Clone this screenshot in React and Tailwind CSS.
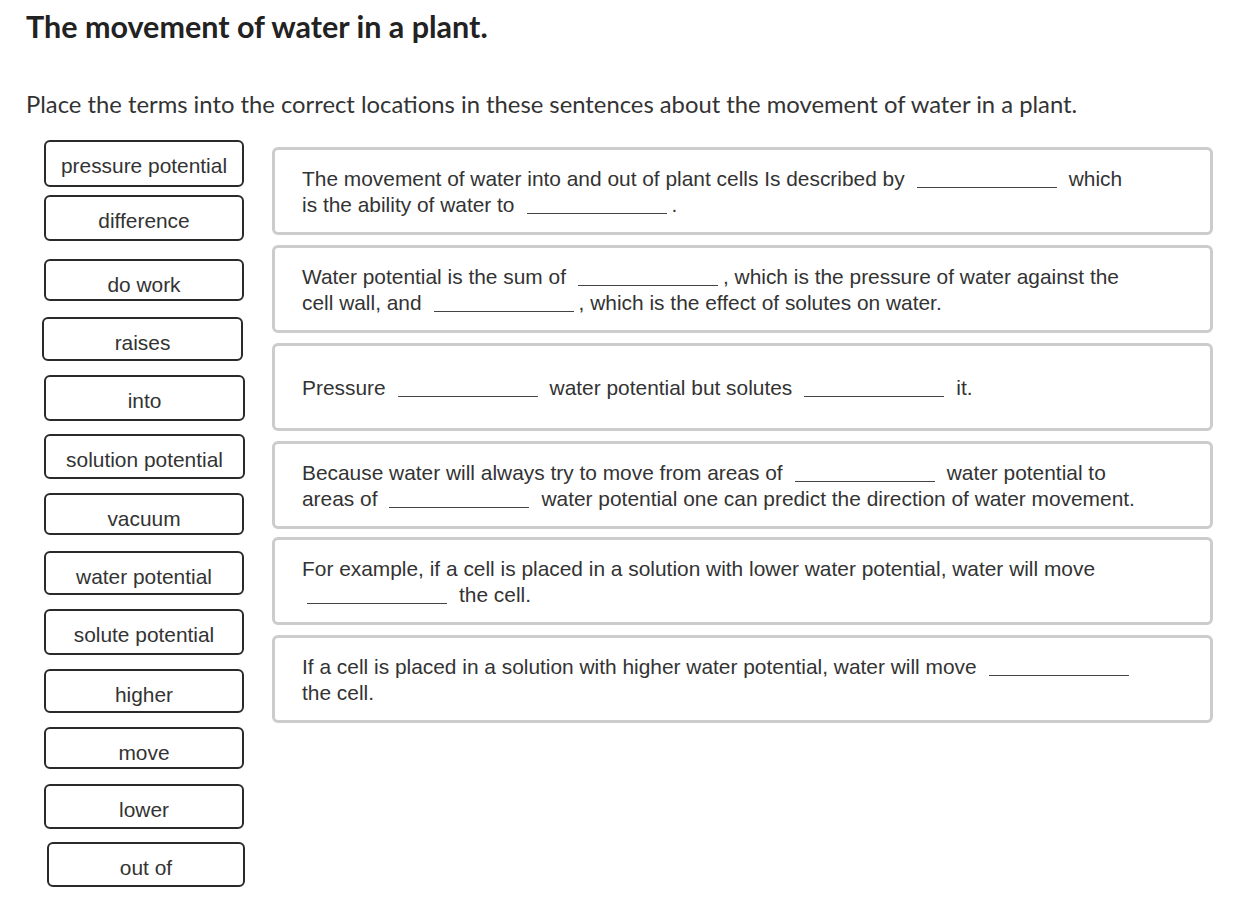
import React from 'react';

const TERMS = [
  { label: 'pressure potential', cls: 'mt-0 ml-[44px] w-[200px] h-[47px]' },
  { label: 'difference', cls: 'mt-[8px] ml-[44px] w-[200px] h-[46px]' },
  { label: 'do work', cls: 'mt-[18px] ml-[44px] w-[200px] h-[42px]' },
  { label: 'raises', cls: 'mt-[16px] ml-[42px] w-[201px] h-[44px]' },
  { label: 'into', cls: 'mt-[14px] ml-[44px] w-[201px] h-[46px]' },
  { label: 'solution potential', cls: 'mt-[13px] ml-[44px] w-[201px] h-[45px]' },
  { label: 'vacuum', cls: 'mt-[14px] ml-[44px] w-[200px] h-[42px]' },
  { label: 'water potential', cls: 'mt-[16px] ml-[44px] w-[200px] h-[44px]' },
  { label: 'solute potential', cls: 'mt-[14px] ml-[44px] w-[200px] h-[46px]' },
  { label: 'higher', cls: 'mt-[14px] ml-[44px] w-[200px] h-[44px]' },
  { label: 'move', cls: 'mt-[14px] ml-[44px] w-[200px] h-[42px]' },
  { label: 'lower', cls: 'mt-[15px] ml-[44px] w-[200px] h-[45px]' },
  { label: 'out of', cls: 'mt-[13px] ml-[47px] w-[198px] h-[45px]' },
];

// blank slot inside a sentence; "tight" when punctuation follows
function Blank({ tight, lead }) {
  const cls = lead
    ? 'inline-block w-[140px] ml-[5px] mr-[12px] border-b border-[#444] translate-y-[2px]'
    : tight
    ? 'inline-block w-[140px] ml-[12px] mr-[5px] border-b border-[#444] translate-y-[2px]'
    : 'inline-block w-[140px] mx-[12px] border-b border-[#444] translate-y-[2px]';
  return <span className={cls} />;
}

function Panel({ children, className }) {
  return (
    <div
      className={`w-[941px] h-[88px] border-[3px] border-[#cccccc] rounded-[6px] flex flex-col justify-center pl-[27px] pt-[2px] text-[20.9px] leading-[26px] text-[#333] whitespace-nowrap ${className}`}
    >
      {children}
    </div>
  );
}

export default function App() {
  return (
    <div
      className="w-[1250px] min-h-[922px] bg-white text-[#333]"
      style={{ fontFamily: '"Liberation Sans", Arial, sans-serif' }}
    >
      <h1
        className="pt-[8px] pl-[26px] text-[30.5px] leading-[36px] font-bold text-[#222]"
        style={{ fontFamily: 'Lato, "Liberation Sans", sans-serif' }}
      >
        The movement of water in a plant.
      </h1>

      <p
        className="mt-[45px] pl-[26px] text-[23.8px] leading-[30px] text-[#333]"
        style={{ fontFamily: 'Lato, "Liberation Sans", sans-serif' }}
      >
        Place the terms into the correct locations in these sentences about the movement of water in a plant.
      </p>

      <div className="flex items-start mt-[21px]">
        {/* term bank */}
        <div className="flex flex-col w-[272px] shrink-0">
          {TERMS.map((t) => (
            <div
              key={t.label}
              className={`${t.cls} border-2 border-[#2a2a2a] rounded-[6px] pt-[12px] text-center text-[20.9px] leading-[24px] text-[#333]`}
            >
              {t.label}
            </div>
          ))}
        </div>

        {/* sentences */}
        <div className="flex flex-col">
          <Panel className="mt-[7px]">
            <div>
              The movement of water into and out of plant cells Is described by
              <Blank />
              which
            </div>
            <div>
              is the ability of water to
              <Blank tight />.
            </div>
          </Panel>

          <Panel className="mt-[10px]">
            <div>
              Water potential is the sum of
              <Blank tight />, which is the pressure of water against the
            </div>
            <div>
              cell wall, and
              <Blank tight />, which is the effect of solutes on water.
            </div>
          </Panel>

          <Panel className="mt-[10px]">
            <div>
              Pressure
              <Blank />
              water potential but solutes
              <Blank />
              it.
            </div>
          </Panel>

          <Panel className="mt-[10px]">
            <div>
              Because water will always try to move from areas of
              <Blank />
              water potential to
            </div>
            <div>
              areas of
              <Blank />
              water potential one can predict the direction of water movement.
            </div>
          </Panel>

          <Panel className="mt-[8px]">
            <div>For example, if a cell is placed in a solution with lower water potential, water will move</div>
            <div>
              <Blank lead />
              the cell.
            </div>
          </Panel>

          <Panel className="mt-[10px]">
            <div>
              If a cell is placed in a solution with higher water potential, water will move
              <Blank />
            </div>
            <div>the cell.</div>
          </Panel>
        </div>
      </div>
    </div>
  );
}
